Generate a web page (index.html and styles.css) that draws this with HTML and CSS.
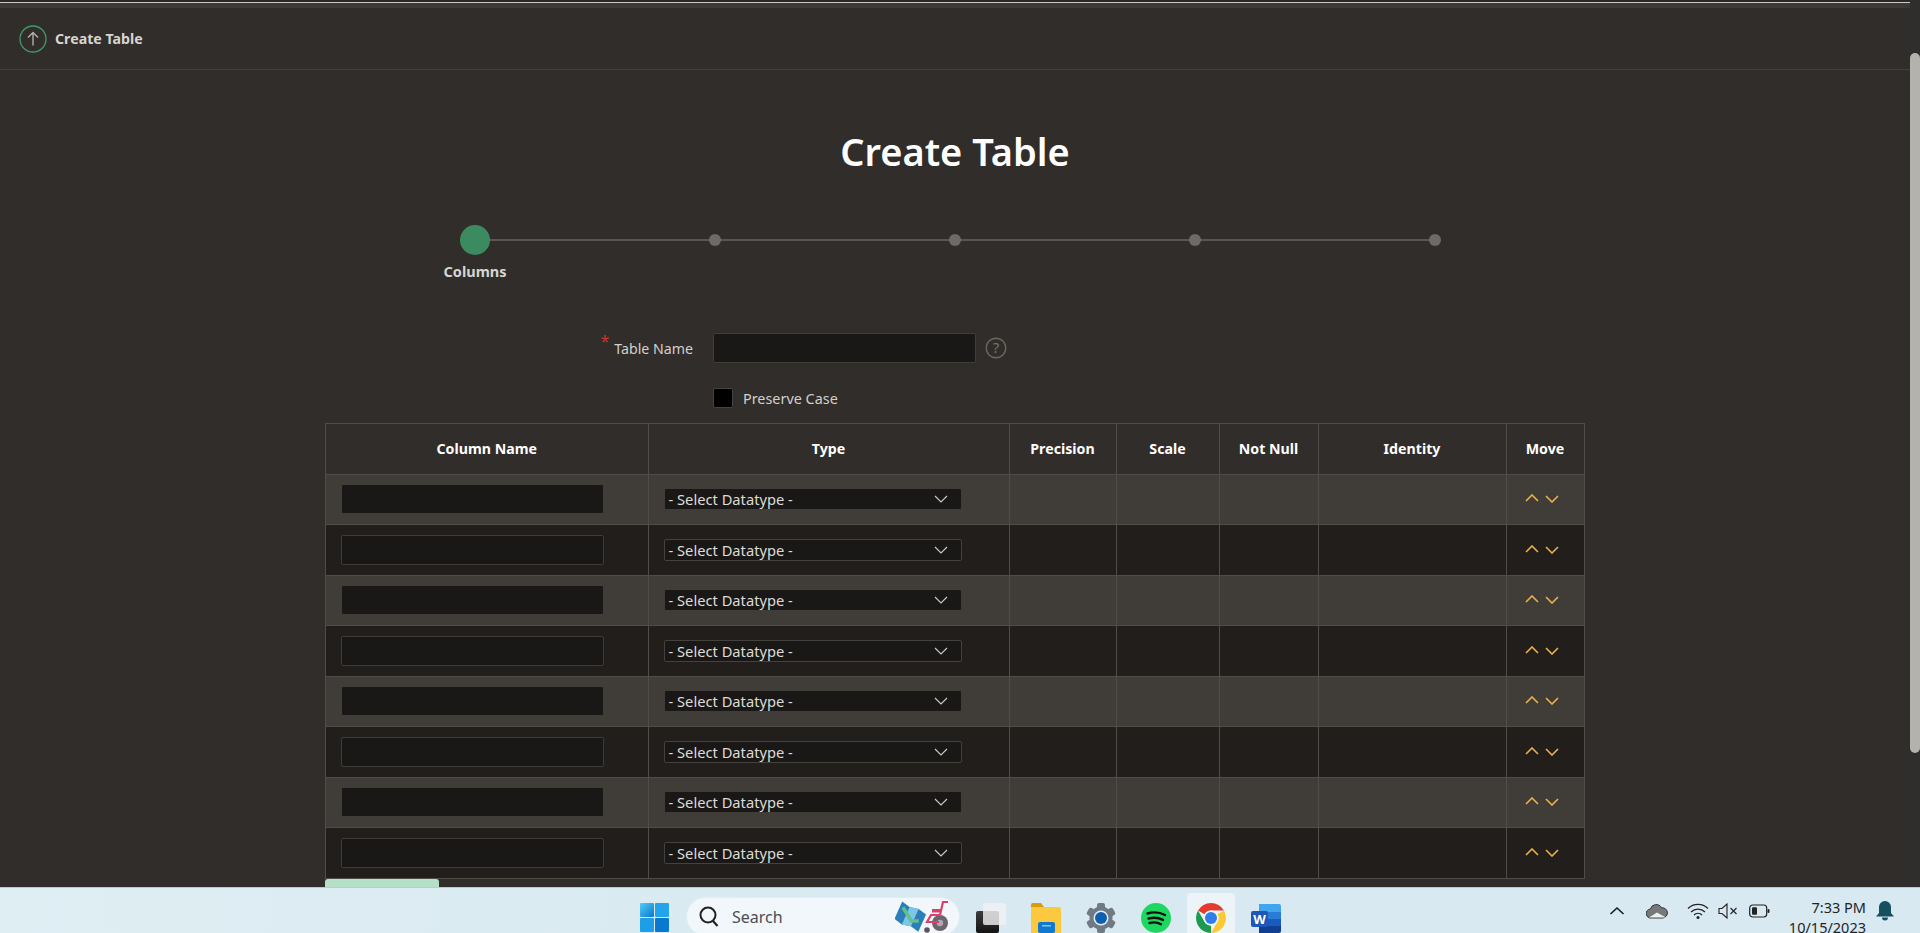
FILE: index.html
```html
<!DOCTYPE html>
<html lang="en">
<head>
<meta charset="utf-8">
<title>Create Table</title>
<link rel="stylesheet" href="styles.css">
</head>
<body>
<div class="window">
  <main class="page">
    <div class="top-strip"></div>
    <header class="crumb">
      <svg class="crumb-icon" width="28" height="28" viewBox="0 0 28 28"><circle cx="14" cy="14" r="13" fill="none" stroke="#3f9a68" stroke-width="1.300"/><path d="M14 20.500V7.500M9 12.500L14 7.500l5 5" fill="none" stroke="#b5b0aa" stroke-width="1.400"/></svg>
      <span class="crumb-text">Create Table</span>
    </header>
    <h1 class="title">Create Table</h1>
    <ol class="steps">
      <li class="step step-first"><div class="track"><span class="dot dot-active"></span></div><span class="step-label">Columns</span></li>
      <li class="step"><div class="track"><span class="dot"></span></div></li>
      <li class="step"><div class="track"><span class="dot"></span></div></li>
      <li class="step"><div class="track"><span class="dot"></span></div></li>
      <li class="step step-last"><div class="track"><span class="dot"></span></div></li>
    </ol>
    <div class="field-row">
      <label class="field-label"><span class="req">*</span>Table Name</label>
      <input class="text-input" type="text">
      <svg class="help" width="22" height="22" viewBox="0 0 22 22"><circle cx="11" cy="11" r="9.800" fill="none" stroke="#6b6762" stroke-width="1.400"/><text x="11" y="16" text-anchor="middle" class="help-mark">?</text></svg>
    </div>
    <div class="check-row">
      <span class="checkbox"></span>
      <span class="check-label">Preserve Case</span>
    </div>
    <table class="grid">
      <colgroup><col class="c1"><col class="c2"><col class="c3"><col class="c4"><col class="c5"><col class="c6"><col class="c7"></colgroup>
      <thead><tr><th>Column Name</th><th>Type</th><th>Precision</th><th>Scale</th><th>Not Null</th><th>Identity</th><th>Move</th></tr></thead>
      <tbody>
        <tr class="odd"><td><input class="cell-input" type="text"></td><td><div class="pick"><span>- Select Datatype -</span><svg width="14" height="8" viewBox="0 0 14 8"><path d="M1 1l6 6 6-6" fill="none" stroke="#cfccc8" stroke-width="1.100"/></svg></div></td><td></td><td></td><td></td><td></td><td><div class="move"><svg class="mv-up" width="14" height="8" viewBox="0 0 14 8"><path d="M1 7l6-6 6 6" fill="none" stroke="#e9b24d" stroke-width="1.600"/></svg><svg width="14" height="8" viewBox="0 0 14 8"><path d="M1 1l6 6 6-6" fill="none" stroke="#e9b24d" stroke-width="1.600"/></svg></div></td></tr>
        <tr class="even"><td><input class="cell-input" type="text"></td><td><div class="pick"><span>- Select Datatype -</span><svg width="14" height="8" viewBox="0 0 14 8"><path d="M1 1l6 6 6-6" fill="none" stroke="#cfccc8" stroke-width="1.100"/></svg></div></td><td></td><td></td><td></td><td></td><td><div class="move"><svg class="mv-up" width="14" height="8" viewBox="0 0 14 8"><path d="M1 7l6-6 6 6" fill="none" stroke="#e9b24d" stroke-width="1.600"/></svg><svg width="14" height="8" viewBox="0 0 14 8"><path d="M1 1l6 6 6-6" fill="none" stroke="#e9b24d" stroke-width="1.600"/></svg></div></td></tr>
        <tr class="odd"><td><input class="cell-input" type="text"></td><td><div class="pick"><span>- Select Datatype -</span><svg width="14" height="8" viewBox="0 0 14 8"><path d="M1 1l6 6 6-6" fill="none" stroke="#cfccc8" stroke-width="1.100"/></svg></div></td><td></td><td></td><td></td><td></td><td><div class="move"><svg class="mv-up" width="14" height="8" viewBox="0 0 14 8"><path d="M1 7l6-6 6 6" fill="none" stroke="#e9b24d" stroke-width="1.600"/></svg><svg width="14" height="8" viewBox="0 0 14 8"><path d="M1 1l6 6 6-6" fill="none" stroke="#e9b24d" stroke-width="1.600"/></svg></div></td></tr>
        <tr class="even"><td><input class="cell-input" type="text"></td><td><div class="pick"><span>- Select Datatype -</span><svg width="14" height="8" viewBox="0 0 14 8"><path d="M1 1l6 6 6-6" fill="none" stroke="#cfccc8" stroke-width="1.100"/></svg></div></td><td></td><td></td><td></td><td></td><td><div class="move"><svg class="mv-up" width="14" height="8" viewBox="0 0 14 8"><path d="M1 7l6-6 6 6" fill="none" stroke="#e9b24d" stroke-width="1.600"/></svg><svg width="14" height="8" viewBox="0 0 14 8"><path d="M1 1l6 6 6-6" fill="none" stroke="#e9b24d" stroke-width="1.600"/></svg></div></td></tr>
        <tr class="odd"><td><input class="cell-input" type="text"></td><td><div class="pick"><span>- Select Datatype -</span><svg width="14" height="8" viewBox="0 0 14 8"><path d="M1 1l6 6 6-6" fill="none" stroke="#cfccc8" stroke-width="1.100"/></svg></div></td><td></td><td></td><td></td><td></td><td><div class="move"><svg class="mv-up" width="14" height="8" viewBox="0 0 14 8"><path d="M1 7l6-6 6 6" fill="none" stroke="#e9b24d" stroke-width="1.600"/></svg><svg width="14" height="8" viewBox="0 0 14 8"><path d="M1 1l6 6 6-6" fill="none" stroke="#e9b24d" stroke-width="1.600"/></svg></div></td></tr>
        <tr class="even"><td><input class="cell-input" type="text"></td><td><div class="pick"><span>- Select Datatype -</span><svg width="14" height="8" viewBox="0 0 14 8"><path d="M1 1l6 6 6-6" fill="none" stroke="#cfccc8" stroke-width="1.100"/></svg></div></td><td></td><td></td><td></td><td></td><td><div class="move"><svg class="mv-up" width="14" height="8" viewBox="0 0 14 8"><path d="M1 7l6-6 6 6" fill="none" stroke="#e9b24d" stroke-width="1.600"/></svg><svg width="14" height="8" viewBox="0 0 14 8"><path d="M1 1l6 6 6-6" fill="none" stroke="#e9b24d" stroke-width="1.600"/></svg></div></td></tr>
        <tr class="odd"><td><input class="cell-input" type="text"></td><td><div class="pick"><span>- Select Datatype -</span><svg width="14" height="8" viewBox="0 0 14 8"><path d="M1 1l6 6 6-6" fill="none" stroke="#cfccc8" stroke-width="1.100"/></svg></div></td><td></td><td></td><td></td><td></td><td><div class="move"><svg class="mv-up" width="14" height="8" viewBox="0 0 14 8"><path d="M1 7l6-6 6 6" fill="none" stroke="#e9b24d" stroke-width="1.600"/></svg><svg width="14" height="8" viewBox="0 0 14 8"><path d="M1 1l6 6 6-6" fill="none" stroke="#e9b24d" stroke-width="1.600"/></svg></div></td></tr>
        <tr class="even"><td><input class="cell-input" type="text"></td><td><div class="pick"><span>- Select Datatype -</span><svg width="14" height="8" viewBox="0 0 14 8"><path d="M1 1l6 6 6-6" fill="none" stroke="#cfccc8" stroke-width="1.100"/></svg></div></td><td></td><td></td><td></td><td></td><td><div class="move"><svg class="mv-up" width="14" height="8" viewBox="0 0 14 8"><path d="M1 7l6-6 6 6" fill="none" stroke="#e9b24d" stroke-width="1.600"/></svg><svg width="14" height="8" viewBox="0 0 14 8"><path d="M1 1l6 6 6-6" fill="none" stroke="#e9b24d" stroke-width="1.600"/></svg></div></td></tr>
      </tbody>
    </table>
    <div class="peek-button"></div>
  </main>
  <aside class="scrollbar"><div class="scroll-thumb"></div></aside>
</div>
<footer class="taskbar">
  <svg class="tb-win" width="29" height="29" viewBox="0 0 29 29">
    <defs><linearGradient id="wg" x1="0" y1="0" x2="1" y2="1"><stop offset="0" stop-color="#4fcdf8"/><stop offset="1" stop-color="#0a78cf"/></linearGradient></defs>
    <rect x="0" y="0" width="14" height="14" rx="1" fill="url(#wg)"/><rect x="15" y="0" width="14" height="14" rx="1" fill="#22a3ea"/><rect x="0" y="15" width="14" height="14" rx="1" fill="#1d9fe8"/><rect x="15" y="15" width="14" height="14" rx="1" fill="#0a78cf"/>
  </svg>
  <div class="tb-search">
    <svg width="22" height="24" viewBox="0 0 22 24"><circle cx="10" cy="10" r="7.500" fill="none" stroke="#222" stroke-width="2"/><path d="M15 16l4.500 5" stroke="#222" stroke-width="2.200"/></svg>
    <span class="tb-search-text">Search</span>
    <svg class="tb-doodle" width="56" height="34" viewBox="0 0 56 34">
      <g transform="rotate(24 15 16)"><path d="M2 6l9 2 9-2 9 2v19l-9-2-9 2-9-2z" fill="#2a7fb8"/><path d="M11 8l9-2v19l-9 2z" fill="#7cc6e6"/><path d="M5 11l6 4 7 5 7-3" fill="none" stroke="#63c08a" stroke-width="3.500"/></g>
      <circle cx="45" cy="23" r="8" fill="#6e6470"/><circle cx="45" cy="23" r="3.200" fill="#b0a7b2"/><circle cx="32" cy="30" r="2.800" fill="#5c5560"/>
      <path d="M53 2h-5l-3 13H36l-4 7h12" fill="none" stroke="#d9406a" stroke-width="2.200"/><rect x="37" y="9" width="9" height="3.500" fill="#d9406a"/>
    </svg>
  </div>
  <svg class="tb-app tb-a1" width="30" height="30" viewBox="0 0 30 30"><defs><linearGradient id="bk" x1="0" y1="0" x2="0" y2="1"><stop offset="0" stop-color="#3d3d3d"/><stop offset="1" stop-color="#141414"/></linearGradient></defs><rect x="0" y="8" width="23" height="22" rx="2" fill="url(#bk)"/><rect x="7" y="0" width="23" height="22" rx="2" fill="#f2f2f2" fill-opacity=".82"/></svg>
  <svg class="tb-app tb-a2" width="30" height="30" viewBox="0 0 30 30"><path d="M0 2a2 2 0 0 1 2-2h8l3 4H0z" fill="#d99a0b"/><path d="M0 4h28a2 2 0 0 1 2 2v24H0z" fill="#fbc93f"/><rect x="7" y="19" width="17" height="11" rx="2" fill="#0e79cf"/><rect x="11" y="22" width="9" height="1.500" fill="#7cc4f2"/></svg>
  <svg class="tb-app tb-a3" width="30" height="30" viewBox="0 0 30 30"><g fill="#6f7a85"><circle cx="15" cy="15" r="11.500"/><rect x="11" y="0" width="8" height="30" rx="2"/><rect x="11" y="0" width="8" height="30" rx="2" transform="rotate(60 15 15)"/><rect x="11" y="0" width="8" height="30" rx="2" transform="rotate(120 15 15)"/></g><circle cx="15" cy="15" r="7.500" fill="#e4edf2"/><circle cx="15" cy="15" r="6" fill="#0e5fb0"/></svg>
  <svg class="tb-app tb-a4" width="30" height="30" viewBox="0 0 30 30"><circle cx="15" cy="15" r="15" fill="#1ed760"/><path d="M6.500 10.500c6-1.800 12-1.300 17.500 1.500M7.500 15.500c5-1.400 10-1 14.500 1.400M8.500 20c4-1 8-.8 11.500 1.200" fill="none" stroke="#111" stroke-width="2.400" stroke-linecap="round"/></svg>
  <div class="tb-tile">
    <svg width="30" height="30" viewBox="0 0 30 30"><path d="M2.010 7.500A15 15 0 0 1 27.990 7.500H15A7.500 7.500 0 0 0 8.500 11.250Z" fill="#e33b2e"/><path d="M2.010 7.500A15 15 0 0 1 27.990 7.500H15A7.500 7.500 0 0 0 8.500 11.250Z" fill="#fcc934" transform="rotate(120 15 15)"/><path d="M2.010 7.500A15 15 0 0 1 27.990 7.500H15A7.500 7.500 0 0 0 8.500 11.250Z" fill="#1e9a50" transform="rotate(240 15 15)"/><circle cx="15" cy="15" r="7.500" fill="#f2f6f9"/><circle cx="15" cy="15" r="6" fill="#2f7de8"/></svg>
  </div>
  <svg class="tb-app tb-a6" width="30" height="30" viewBox="0 0 30 30"><path d="M8 1h20a2 2 0 0 1 2 2v6H8z" fill="#41a5ee"/><rect x="8" y="9" width="22" height="7" fill="#2b7cd3"/><rect x="8" y="16" width="22" height="7" fill="#185abd"/><path d="M8 23h22v5a2 2 0 0 1-2 2H8z" fill="#103f91"/><rect x="0" y="8" width="17" height="16" rx="2" fill="#1f57b8"/><text x="8.500" y="21" text-anchor="middle" class="word-w">W</text></svg>
  <div class="tray">
    <svg class="tr-caret" width="16" height="10" viewBox="0 0 16 10"><path d="M1.500 8L8 2l6.500 6" fill="none" stroke="#1b1b1b" stroke-width="1.600"/></svg>
    <svg class="tr-cloud" width="22" height="16" viewBox="0 0 22 16"><path d="M5 15a4.500 4.500 0 0 1-.6-9A6 6 0 0 1 15.500 4.800 5 5 0 0 1 17 15z" fill="#77787a" stroke="#333" stroke-width="1"/><path d="M3 14.500l8-5 9 5z" fill="#eceeef"/></svg>
    <svg class="tr-wifi" width="22" height="18" viewBox="0 0 22 18"><path d="M1 6.500a14 14 0 0 1 20 0M4 10a10 10 0 0 1 14 0M7 13a5.500 5.500 0 0 1 8 0" fill="none" stroke="#222" stroke-width="1.200"/><circle cx="11" cy="15.500" r="1.500" fill="#222"/></svg>
    <svg class="tr-vol" width="20" height="16" viewBox="0 0 20 16"><path d="M1 5.500h3L9 1v14l-5-4.500H1z" fill="none" stroke="#222" stroke-width="1.100"/><path d="M12.500 5l6 6M18.500 5l-6 6" stroke="#222" stroke-width="1.100"/></svg>
    <svg class="tr-bat" width="21" height="14" viewBox="0 0 21 14"><rect x=".7" y="1" width="17" height="12" rx="3" fill="none" stroke="#222" stroke-width="1.200"/><rect x="3" y="3.300" width="5" height="7.400" rx="1" fill="#222"/><rect x="18.500" y="5" width="2" height="4" rx="1" fill="#222"/></svg>
    <div class="clock"><span>7:33 PM</span><span>10/15/2023</span></div>
    <svg class="tr-bell" width="18" height="20" viewBox="0 0 18 20"><path d="M9 0a6 6 0 0 1 6 6v6l3 3.500H0L3 12V6a6 6 0 0 1 6-6z" fill="#14505f"/><path d="M6 16.500h6a3 3 0 0 1-6 0z" fill="#14505f"/></svg>
  </div>
</footer>
</body>
</html>
```
FILE: styles.css
```css
* { box-sizing: border-box; }
html, body { margin: 0; padding: 0; height: 100%; }
body { width: 1920px; height: 933px; overflow: hidden; display: flex; flex-direction: column; background: #312d2a; font-family: "Noto Sans", sans-serif; color: #e0dedb; }

.window { display: flex; height: 887px; flex: none; }
.page { width: 1910px; flex: none; display: flex; flex-direction: column; overflow: hidden; background: #312d2a; }
.top-strip { height: 8px; flex: none; border-top: 2px solid #2b2826; background: #3d3a36; box-shadow: inset 0 1px 0 #c9c9c7; }
.crumb { height: 62px; flex: none; display: flex; align-items: center; gap: 8px; padding: 0 0 0 19px; border-bottom: 1px solid #43403c; }
.crumb-text { font-size: 14.200px; font-weight: 700; color: #d8d5d1; }
.title { margin: 57px 0 0; font-size: 38px; line-height: 48px; font-weight: 600; color: #fff; text-align: center; }

.steps { list-style: none; margin: 50px 0 0; padding: 0; display: grid; grid-template-columns: repeat(5, 240px); justify-content: center; }
.step { display: flex; flex-direction: column; align-items: center; }
.track { width: 100%; height: 30px; display: flex; align-items: center; justify-content: center; background: linear-gradient(#5a5651, #5a5651) center / 100% 2px no-repeat; }
.step-first .track { background-position: right center; background-size: 50% 2px; }
.step-last .track { background-position: left center; background-size: 50% 2px; }
.dot { width: 12px; height: 12px; border-radius: 50%; background: #6f6a65; }
.dot-active { width: 30px; height: 30px; background: #3c8a60; }
.step-label { margin-top: 6px; margin-bottom: 1px; font-size: 14.500px; line-height: 20px; font-weight: 700; color: #d8d5d1; }

.field-row { display: flex; align-items: center; margin: 51px 0 0 0; padding-left: 598px; height: 30px; }
.field-label { width: 115px; font-size: 14.200px; color: #d3d0cc; display: flex; align-items: baseline; padding-right: 20px; justify-content: flex-end; }
.req { color: #c9372c; font-size: 16px; margin-right: 5px; position: relative; top: -7px; }
.text-input { width: 263px; height: 30px; margin: 0; padding: 0 8px; background: #1a1816; border: 1px solid #413e3a; border-radius: 2px; outline: 0; }
.help { margin-left: 9px; }
.help-mark { font-size: 15px; fill: #75716b; font-family: "Noto Sans", sans-serif; }

.check-row { display: flex; align-items: center; gap: 10px; margin-top: 25px; padding-left: 713px; height: 20px; }
.checkbox { width: 20px; height: 20px; background: #000; border: 1px solid #45423e; border-radius: 2px; }
.check-label { font-size: 14.400px; color: #d3d0cc; }

.grid { margin: 15px 0 0 325px; width: 1258.500px; table-layout: fixed; border-collapse: collapse; flex: none; }
.c1 { width: 322.500px; } .c2 { width: 361px; } .c3 { width: 107px; } .c4 { width: 103px; } .c5 { width: 99px; } .c6 { width: 188px; } .c7 { width: 78px; }
.grid th, .grid td { height: 50.500px; padding: 0; border: 1px solid #504d48; }
.grid th { font-size: 14.200px; font-weight: 700; color: #fff; text-align: center; background: #312d2a; }
.odd td { background: #403d38; }
.even td { background: #211e1b; }
.cell-input { display: block; width: 263px; height: 30px; margin: 0 0 0 15px; background: #1a1816; border: 1px solid #403d38; border-radius: 2px; outline: 0; }
.even .cell-input { border-color: #3f3c38; }
.pick { width: 298px; height: 22px; margin-left: 15px; padding: 0 13px 0 4px; display: flex; align-items: center; justify-content: space-between; background: #1a1816; border: 1px solid #403d38; border-radius: 2px; font-size: 14.700px; color: #dedbd7; }
.even .pick { border-color: #45423d; }
.move { display: flex; justify-content: center; align-items: center; gap: 6px; padding-right: 6px; }
.mv-up { margin-bottom: 2px; }

.peek-button { width: 114px; height: 9px; margin: 0 0 0 325px; background: #b5dfc7; border-radius: 3px 3px 0 0; flex: none; }

.scrollbar { width: 10px; flex: none; padding-top: 53px; background: #2f2e2c; }
.scroll-thumb { height: 700px; background: #b3b2ad; border-radius: 5px; }

.taskbar { height: 46px; flex: none; display: flex; align-items: flex-start; padding-left: 640px; overflow: hidden; background: linear-gradient(90deg, #dfeef3, #d8e9f1 50%, #d9e9f2); border-top: 1px solid #bcc9cf; }
.tb-win { margin-top: 15px; flex: none; }
.tb-search { width: 274px; height: 39px; flex: none; margin: 9px 0 0 17px; padding: 0 8px 0 11px; display: flex; align-items: center; background: #f1f7fa; border: 1px solid #e2edf2; border-radius: 20px; }
.tb-search-text { margin-left: 12px; font-size: 16px; color: #4a4f52; }
.tb-doodle { margin-left: auto; }
.tb-app { margin-top: 15px; flex: none; }
.tb-a1 { margin-left: 16px; }
.tb-a2 { margin-left: 25px; }
.tb-a3 { margin-left: 25px; }
.tb-a4 { margin-left: 25px; }
.tb-tile { width: 48px; height: 42px; flex: none; margin: 5px 0 0 16px; padding: 10px 0 0 9px; background: #edf4f8; border-radius: 4px; }
.tb-a6 { margin-left: 16px; }
.word-w { font-size: 13px; font-weight: 700; fill: #fff; font-family: "Noto Sans", sans-serif; }

.tray { margin-left: auto; height: 45px; display: flex; align-items: center; padding-right: 26px; }
.tr-cloud { margin-left: 21px; }
.tr-wifi { margin-left: 19px; }
.tr-vol { margin-left: 9px; }
.tr-bat { margin-left: 11px; }
.clock { margin-left: 18px; margin-top: 12px; width: 78px; display: flex; flex-direction: column; align-items: flex-end; gap: 8px; font-size: 14.500px; line-height: 12px; color: #1f2326; }
.tr-bell { margin-left: 10px; }
```
